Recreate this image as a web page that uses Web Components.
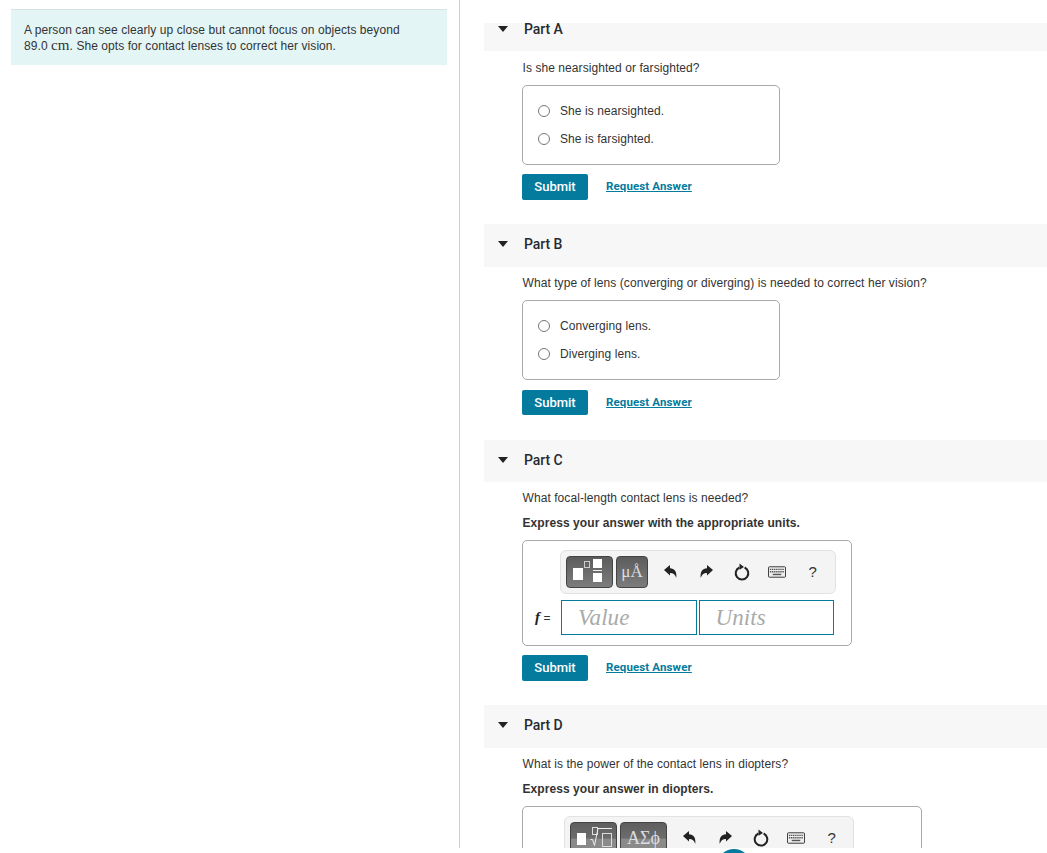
<!DOCTYPE html>
<html lang="en">
<head>
<meta charset="utf-8">
<title>Part A</title>
<style>
  html, body { margin:0; height:100%; background:#fff; overflow:hidden; }
  body { font-family:"Liberation Sans", Arial, sans-serif; font-size:12px; letter-spacing:.07px; color:#333; position:relative; }
</style>
</head>
<body>
<mp-app>
  <mp-intro slot="left">A person can see clearly up close but cannot focus on objects beyond<br>89.0 <mp-unit>cm</mp-unit>. She opts for contact lenses to correct her vision.</mp-intro>

  <mp-part label="Part A" clipped>
    <mp-question>Is she nearsighted or farsighted?</mp-question>
    <mp-choices><mp-radio>She is nearsighted.</mp-radio><mp-radio>She is farsighted.</mp-radio></mp-choices>
    <mp-actions></mp-actions>
  </mp-part>

  <mp-part label="Part B">
    <mp-question>What type of lens (converging or diverging) is needed to correct her vision?</mp-question>
    <mp-choices><mp-radio>Converging lens.</mp-radio><mp-radio>Diverging lens.</mp-radio></mp-choices>
    <mp-actions></mp-actions>
  </mp-part>

  <mp-part label="Part C">
    <mp-question>What focal-length contact lens is needed?<b slot="hint">Express your answer with the appropriate units.</b></mp-question>
    <mp-answer variable="f">
      <mp-toolbar kind="units"></mp-toolbar>
    </mp-answer>
    <mp-actions></mp-actions>
  </mp-part>

  <mp-part label="Part D">
    <mp-question>What is the power of the contact lens in diopters?<b slot="hint">Express your answer in diopters.</b></mp-question>
    <mp-answer wide>
      <mp-toolbar kind="greek"></mp-toolbar>
    </mp-answer>
  </mp-part>
</mp-app>
<mp-fab></mp-fab>

<script>
// small helper so each element only has to declare its markup
function shadow(el, html) {
  if (!el.shadowRoot) {
    el.attachShadow({ mode: 'open' });
    el.shadowRoot.innerHTML = html;
  }
  return el.shadowRoot;
}

class MpApp extends HTMLElement {
  connectedCallback() {
    shadow(this, `
      <style>
        :host { display:flex; height:848px; overflow:hidden; background:#fff; }
        .left { width:459px; box-sizing:border-box; padding:9px 12px 0 11px; flex:none; }
        .line { width:1px; background:#c5d0de; flex:none; }
        .right { flex:1; min-width:0; margin-top:23px; padding-left:24px; overflow:hidden; }
      </style>
      <div class="left"><slot name="left"></slot></div>
      <div class="line"></div>
      <div class="right"><slot></slot></div>`);
  }
}

class MpIntro extends HTMLElement {
  connectedCallback() {
    shadow(this, `
      <style>
        :host { display:block; background:#e4f5f6; border-top:1px solid #d8e2e3; padding:13px 12px 11px 13px; line-height:15px; color:#333; }
      </style>
      <slot></slot>`);
  }
}

class MpUnit extends HTMLElement {
  connectedCallback() {
    shadow(this, `
      <style>:host { display:inline; font-family:"Liberation Serif", serif; font-size:15px; letter-spacing:.1px; line-height:1; }</style>
      <slot></slot>`);
  }
}

class MpPart extends HTMLElement {
  connectedCallback() {
    const label = this.getAttribute('label');
    shadow(this, `
      <style>
        :host { display:block; margin-bottom:24.5px; }
        :host([clipped]) { margin-top:-14.1px; }
        .head { height:42.5px; box-sizing:border-box; padding-bottom:3px; background:#f7f7f7; display:flex; align-items:center; font-family:Roboto, sans-serif; font-size:14px; font-weight:500; letter-spacing:-.05px; color:#262a33; }
        .arrow { width:0; height:0; border:5px solid transparent; border-top:6px solid #222; border-bottom:0; margin:0 16px 0 14px; }
        .body { padding:0 0 0 38px; }
      </style>
      <div class="head"><span class="arrow"></span><span>${label}</span></div>
      <div class="body"><slot></slot></div>`);
  }
}

class MpQuestion extends HTMLElement {
  connectedCallback() {
    shadow(this, `
      <style>
        :host { display:block; padding:9.1px 0 0 .5px; line-height:15px; color:#333; }
        ::slotted(b) { font-weight:700; display:block; margin-top:10px; }
      </style>
      <div><slot></slot></div>
      <div><slot name="hint"></slot></div>`);
  }
}

class MpChoices extends HTMLElement {
  connectedCallback() {
    shadow(this, `
      <style>
        :host { display:block; box-sizing:border-box; width:258px; height:80px; margin-top:9.3px; border:1px solid #a9a9a9; border-radius:5px; padding:10.8px 15px; }
      </style>
      <slot></slot>`);
  }
}

class MpRadio extends HTMLElement {
  connectedCallback() {
    shadow(this, `
      <style>
        :host { display:flex; align-items:center; height:28px; gap:10px; color:#333; }
        .dot { width:12px; height:12px; box-sizing:border-box; border:1px solid #777; border-radius:50%; background:#fff; flex:none; }
      </style>
      <span class="dot"></span><span><slot></slot></span>`);
  }
}

class MpActions extends HTMLElement {
  connectedCallback() {
    shadow(this, `
      <style>
        :host { display:flex; align-items:center; gap:18px; margin-top:9.5px; height:25.6px; }
        .submit { width:66px; height:100%; display:flex; align-items:center; justify-content:center; background:#047a9c; color:#fff; font-family:Roboto, sans-serif; font-size:13px; font-weight:500; letter-spacing:0; border-radius:2px; padding-bottom:1px; box-sizing:border-box; }
        a { color:#047a9c; font-family:Roboto, sans-serif; font-weight:700; font-size:11.5px; letter-spacing:.12px; text-decoration:underline; margin-top:-2px; }
      </style>
      <span class="submit">Submit</span><a href="#">Request Answer</a>`);
  }
}

class MpAnswer extends HTMLElement {
  connectedCallback() {
    const variable = this.getAttribute('variable');
    const row = variable ? `
      <div class="row">
        <span class="var"><i>${variable}</i> =</span>
        <span class="field">Value</span><span class="field">Units</span>
      </div>` : '';
    shadow(this, `
      <style>
        :host { display:block; box-sizing:border-box; width:330px; height:105.5px; margin-top:8.8px; border:1px solid #a9a9a9; border-radius:5px; padding:8.5px 15px 0 11px; }
        :host([wide]) { width:400px; padding:9.5px 0 0 41px; }
        ::slotted(mp-toolbar) { margin-left:26px; }
        :host([wide]) ::slotted(mp-toolbar) { margin-left:0; }
        .row { display:flex; align-items:center; margin-top:6px; }
        .var { width:26px; padding-left:1px; flex:none; font-size:12px; white-space:nowrap; }
        .var i { font-family:"Liberation Serif", serif; font-size:15px; font-weight:700; color:#222; }
        .field { box-sizing:border-box; width:136px; height:35px; border:1px solid #047a9c; margin-right:2px; padding-left:16px; font:italic 23px/33px "Liberation Serif", serif; color:#aaa; }
      </style>
      <slot></slot>${row}`);
  }
}

const ICONS = `
  <svg class="ic" width="18" height="18" viewBox="0 0 18 18"><path fill="#222" d="M2 7 8 2v3.300c4.500.2 7 3 6.300 9.700-.9-3.300-2.800-5.100-6.300-5.100V12.500z"/></svg>
  <svg class="ic" width="18" height="18" viewBox="0 0 18 18"><path fill="#222" d="M16 7 10 2v3.300c-4.500.2-7 3-6.300 9.700.9-3.300 2.800-5.100 6.300-5.100V12.500z"/></svg>
  <svg class="ic" width="18" height="18" viewBox="0 0 18 18"><path fill="none" stroke="#222" stroke-width="2" d="M11.600 4.500A6.300 6.300 0 1 1 6.400 4.500"/><path fill="#222" d="M6.500 .5 11 4 6.500 6.800z"/></svg>
  <svg class="ic" width="19" height="12" viewBox="0 0 19 12"><rect x=".5" y=".5" width="18" height="11" rx="1" fill="#eee" stroke="#333"/><path stroke="#555" stroke-width="1.500" stroke-dasharray="1.500 .7" d="M2 3.200h15M2 5.800h15"/><path stroke="#555" stroke-width="1.500" d="M5 8.600h9"/></svg>
  <span class="ic help">?</span>`;

class MpToolbar extends HTMLElement {
  connectedCallback() {
    const greek = this.getAttribute('kind') === 'greek';
    const first = greek ? `
      <svg width="47" height="32" viewBox="0 0 47 32"><rect x="7" y="11" width="9" height="12" fill="#fff"/><rect x="22.500" y="5.500" width="5" height="7" fill="none" stroke="#ddd"/><path d="M20.500 17.500h2l2 6 3.500-17h14" fill="none" stroke="#eee"/><rect x="32.500" y="11.500" width="9" height="13" fill="none" stroke="#ddd"/></svg>`
      : `
      <svg width="47" height="32" viewBox="0 0 47 32"><rect x="7" y="12" width="10" height="12" fill="#fff"/><rect x="18.500" y="5.500" width="5" height="6" fill="none" stroke="#ccc"/><rect x="27" y="3" width="9" height="9" fill="#fff"/><rect x="27" y="14" width="9" height="1" fill="#eee"/><rect x="27" y="17" width="9" height="9" fill="#fff"/></svg>`;
    const second = greek ? 'ΑΣϕ' : 'μÅ';
    const fill = greek ? '#5f5f5f,#6c6c6c 50%,#8a8a8a 55%,#8a8a8a' : '#5c5c5c,#7c7c7c';
    shadow(this, `
      <style>
        :host { display:flex; align-items:center; box-sizing:border-box; width:${greek ? 290 : 276}px; height:44px; padding:0 5px; background:#f4f4f4; border:1px solid #e2e2e2; border-radius:6px; }
        .tpl { width:47px; height:32px; box-sizing:border-box; flex:none; border:1px solid #444; border-radius:4px; background:linear-gradient(${fill}); display:flex; align-items:center; justify-content:center; overflow:hidden; color:#ddd; font-family:"Liberation Serif", serif; font-size:${greek ? 18 : 17}px; }
        .tpl svg { margin:-1px; flex:none; }
        .sym { width:${greek ? 47 : 32}px; margin-left:3px; }
        .icons { display:flex; align-items:center; margin-left:5px; }
        .ic { width:18px; flex:none; margin:0 8.750px; text-align:center; }
        .help { font-size:15px; color:#333; line-height:18px; }
      </style>
      <span class="tpl">${first}</span>
      <span class="tpl sym">${second}</span>
      <span class="icons">${ICONS}</span>`);
  }
}

class MpFab extends HTMLElement {
  connectedCallback() {
    shadow(this, `
      <style>
        :host { display:block; position:absolute; left:717px; top:849px; width:34px; height:34px; border-radius:50%; background:#047a9c; }
      </style>`);
  }
}

[['mp-app', MpApp], ['mp-intro', MpIntro], ['mp-unit', MpUnit], ['mp-part', MpPart],
 ['mp-question', MpQuestion], ['mp-choices', MpChoices], ['mp-radio', MpRadio],
 ['mp-actions', MpActions], ['mp-answer', MpAnswer], ['mp-toolbar', MpToolbar], ['mp-fab', MpFab]
].forEach(([name, cls]) => customElements.define(name, cls));
</script>
</body>
</html>
